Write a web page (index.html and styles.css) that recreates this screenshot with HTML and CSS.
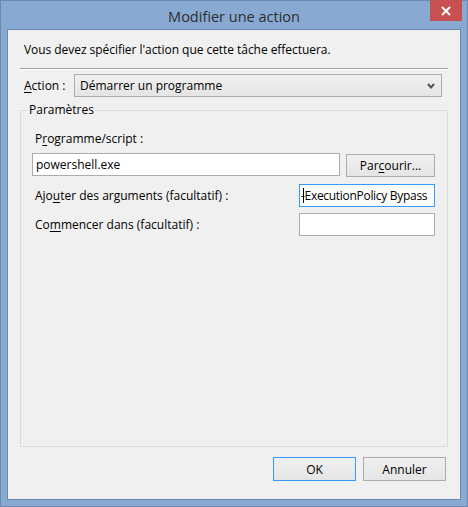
FILE: index.html
```html
<!DOCTYPE html>
<html lang="fr">
<head>
<meta charset="utf-8">
<title>Modifier une action</title>
<link rel="stylesheet" href="styles.css">
</head>
<body>
<div class="window">
  <div class="titlebar">
    <span class="title">Modifier une action</span>
    <div class="close">
      <svg width="10" height="10" viewBox="0 0 10 10"><path d="M1 1 L9 9 M9 1 L1 9" stroke="#fff" stroke-width="2" fill="none"/></svg>
    </div>
  </div>
  <div class="client">
    <div class="intro">Vous devez spécifier l'action que cette tâche effectuera.</div>
    <div class="sep"></div>
    <div class="action-row">
      <span class="label action-label"><u>A</u>ction :</span>
      <div class="combo">
        <span>Démarrer un programme</span>
        <svg class="chev" width="8" height="6" viewBox="0 0 8 6"><path d="M1 1 L4 4.5 L7 1" stroke="#555" stroke-width="2" fill="none"/></svg>
      </div>
    </div>
    <div class="group">
      <span class="legend">Paramètres</span>
      <div class="label prog-label">P<u>r</u>ogramme/script :</div>
      <div class="prog-row">
        <div class="input prog-input">powershell.exe</div>
        <div class="btn browse">Par<u>c</u>ourir...</div>
      </div>
      <div class="field-row args-row">
        <span class="label">Ajo<u>u</u>ter des arguments (facultatif) :</span>
        <div class="input small focused"><span class="caret"></span><span class="argtext">-ExecutionPolicy Bypass</span></div>
      </div>
      <div class="field-row start-row">
        <span class="label">Co<u>m</u>mencer dans (facultatif) :</span>
        <div class="input small"></div>
      </div>
    </div>
    <div class="buttons">
      <div class="btn dialog-btn default">OK</div>
      <div class="btn dialog-btn">Annuler</div>
    </div>
  </div>
</div>
</body>
</html>
```

FILE: styles.css
```css
* { box-sizing: border-box; }
html, body { margin: 0; padding: 0; }
body {
  width: 468px;
  height: 507px;
  font-family: "Open Sans", "Noto Sans", sans-serif;
  font-size: 12px;
  color: #000;
}
.window {
  width: 468px;
  height: 507px;
  background: #88a9d2;
  border: 1px solid #6c89b1;
  padding: 0 6px 6px 6px;
  display: flex;
  flex-direction: column;
}
.titlebar {
  position: relative;
  height: 28px;
  display: flex;
  align-items: center;
  justify-content: center;
}
.title {
  font-size: 14.5px;
  color: #2e2e2e;
  margin-top: 2px;
}
.close {
  position: absolute;
  top: -1px;
  right: -1px;
  width: 32px;
  height: 21px;
  background: #c75050;
  display: flex;
  align-items: center;
  justify-content: center;
}
.client {
  flex: 1;
  background: #f0f0f0;
  border: 1px solid #6c89b1;
  display: flex;
  flex-direction: column;
}
.intro {
  margin: 12px 0 0 16px;
  line-height: 16px;
  letter-spacing: -0.05px;
}
.sep {
  margin: 10px 12px 0 12px;
  height: 2px;
  border-top: 1px solid #a0a0a0;
  border-bottom: 1px solid #fff;
}
.label { line-height: 16px; }
u { text-decoration: underline; text-underline-offset: 2px; }
.action-row {
  margin: 4px 0 0 16px;
  height: 23px;
  display: flex;
  align-items: center;
}
.action-label { width: 50px; }
.combo {
  width: 368px;
  height: 23px;
  border: 1px solid #acacac;
  background: linear-gradient(#f0f0f0, #e5e5e5);
  display: flex;
  align-items: center;
  justify-content: space-between;
  padding: 0 6px 0 5px;
}
.chev { margin-top: 1px; }
.group {
  position: relative;
  margin: 13px 12px 0 12px;
  height: 337px;
  border: 1px solid #dcdcdc;
  padding: 20px 0 0 11px;
}
.legend {
  position: absolute;
  top: -9px;
  left: 6px;
  padding: 0 2px;
  background: #f0f0f0;
  line-height: 16px;
}
.prog-label { margin-left: 3px; }
.prog-row {
  margin-top: 6px;
  height: 24px;
  display: flex;
  gap: 6px;
}
.input {
  height: 23px;
  background: #fff;
  border: 1px solid #acacac;
  line-height: 21px;
  padding: 0 3px;
  overflow: hidden;
  white-space: nowrap;
}
.prog-input { width: 308px; }
.btn {
  height: 23px;
  border: 1px solid #acacac;
  background: linear-gradient(#f0f0f0, #e5e5e5);
  display: flex;
  align-items: center;
  justify-content: center;
}
.browse { width: 89px; margin-top: 1px; }
.field-row {
  display: flex;
  align-items: center;
  justify-content: space-between;
  width: 400px;
  margin-left: 3px;
}
.args-row { margin-top: 7px; }
.start-row { margin-top: 6px; }
.small { width: 136px; position: relative; padding: 0; }
.focused { border-color: #3399ff; }
.caret {
  position: absolute;
  left: 3px;
  top: 3px;
  width: 1px;
  height: 15px;
  background: #000;
}
.argtext { margin-left: 1px; letter-spacing: -0.3px; }
.buttons {
  margin: 10px 14px 0 0;
  display: flex;
  justify-content: flex-end;
  gap: 7px;
}
.dialog-btn { width: 83px; height: 24px; }
.default { border-color: #3399ff; }
```
